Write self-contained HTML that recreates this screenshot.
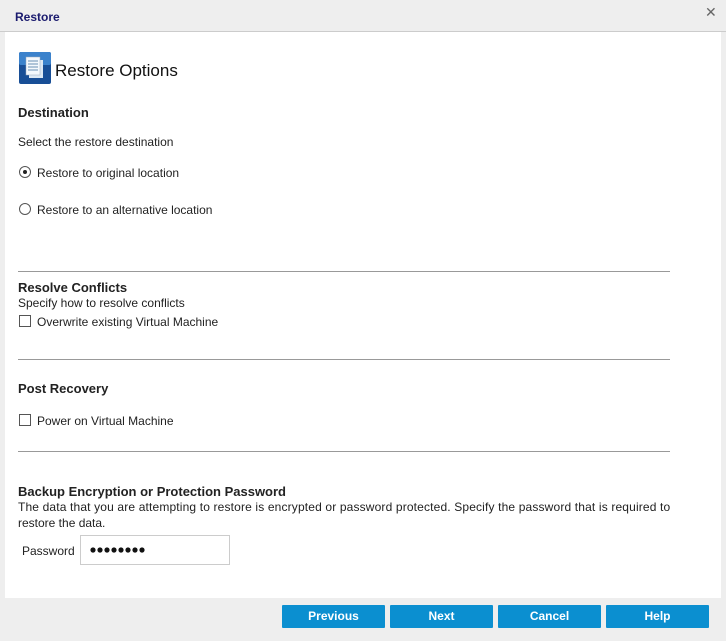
<!DOCTYPE html><html><head><style>
body{margin:0;width:726px;height:641px;background:#eeeeee;font-family:"Liberation Sans",sans-serif;font-size:12px;color:#222;position:relative;overflow:hidden}
.a{position:absolute;white-space:nowrap}
.h{font-weight:bold;font-size:13px;color:#222}
.hr{position:absolute;left:18px;width:652px;height:1px;background:#999}
.rb{position:absolute;width:10px;height:10px;border:1px solid #555;border-radius:50%;background:#fff}
.cb{position:absolute;width:10px;height:10px;border:1px solid #555;background:#fff}
.btn{position:absolute;top:605px;width:103px;height:23px;background:#0b8fd0;color:#fff;font-weight:bold;font-size:12px;text-align:center;line-height:23px;border-radius:1px}
</style></head><body>
<div class="a" style="left:0;top:0;width:726px;height:31px;border-bottom:1px solid #ccc;background:#eee"></div>
<div class="a" style="left:15px;top:10px;font-weight:bold;color:#1a1a6e;font-size:12px">Restore</div>
<div class="a" style="left:705px;top:4px;font-size:14px;color:#666">✕</div>
<div class="a" style="left:5px;top:32px;width:716px;height:566px;background:#fff"></div>
<svg class="a" style="left:19px;top:52px" width="32" height="32"><rect x="0" y="0" width="32" height="32" rx="2" fill="#184e96"/><rect x="0" y="0" width="32" height="13" rx="2" fill="#3b82cc"/><rect x="10" y="8" width="14" height="18" fill="#dde8f3"/><rect x="7" y="5" width="14" height="18" fill="#f4f8fc" stroke="#9ab" stroke-width=".5"/><g stroke="#6a8fb5"><line x1="9" y1="9" x2="19" y2="9"/><line x1="9" y1="12" x2="19" y2="12"/><line x1="9" y1="15" x2="19" y2="15"/><line x1="9" y1="18" x2="19" y2="18"/></g></svg>
<div class="a" style="left:55px;top:61px;font-size:17px;color:#111">Restore Options</div>
<div class="a h" style="left:18px;top:105px">Destination</div>
<div class="a" style="left:18px;top:135px">Select the restore destination</div>
<div class="rb" style="left:19px;top:166px"></div><div class="a" style="left:23px;top:170px;width:4px;height:4px;border-radius:50%;background:#222"></div>
<div class="a" style="left:37px;top:166px">Restore to original location</div>
<div class="rb" style="left:19px;top:203px"></div>
<div class="a" style="left:37px;top:203px">Restore to an alternative location</div>
<div class="hr" style="top:271px"></div>
<div class="a h" style="left:18px;top:280px">Resolve Conflicts</div>
<div class="a" style="left:18px;top:296px">Specify how to resolve conflicts</div>
<div class="cb" style="left:19px;top:315px"></div>
<div class="a" style="left:37px;top:315px">Overwrite existing Virtual Machine</div>
<div class="hr" style="top:359px"></div>
<div class="a h" style="left:18px;top:381px">Post Recovery</div>
<div class="cb" style="left:19px;top:414px"></div>
<div class="a" style="left:37px;top:414px">Power on Virtual Machine</div>
<div class="hr" style="top:451px"></div>
<div class="a h" style="left:18px;top:484px">Backup Encryption or Protection Password</div>
<div class="a" style="left:18px;top:500px;letter-spacing:0.15px">The data that you are attempting to restore is encrypted or password protected. Specify the password that is required to</div>
<div class="a" style="left:18px;top:516px">restore the data.</div>
<div class="a" style="left:22px;top:544px">Password</div>
<div class="a" style="left:80px;top:535px;width:148px;height:28px;border:1px solid #ccc;background:#fff"></div>
<svg class="a" style="left:90px;top:546px" width="80" height="8"><g fill="#111"><circle cx="3" cy="4" r="2.6"/><circle cx="10" cy="4" r="2.6"/><circle cx="17" cy="4" r="2.6"/><circle cx="24" cy="4" r="2.6"/><circle cx="31" cy="4" r="2.6"/><circle cx="38" cy="4" r="2.6"/><circle cx="45" cy="4" r="2.6"/><circle cx="52" cy="4" r="2.6"/></g></svg>
<div class="btn" style="left:282px">Previous</div>
<div class="btn" style="left:390px">Next</div>
<div class="btn" style="left:498px">Cancel</div>
<div class="btn" style="left:606px">Help</div>
</body></html>
